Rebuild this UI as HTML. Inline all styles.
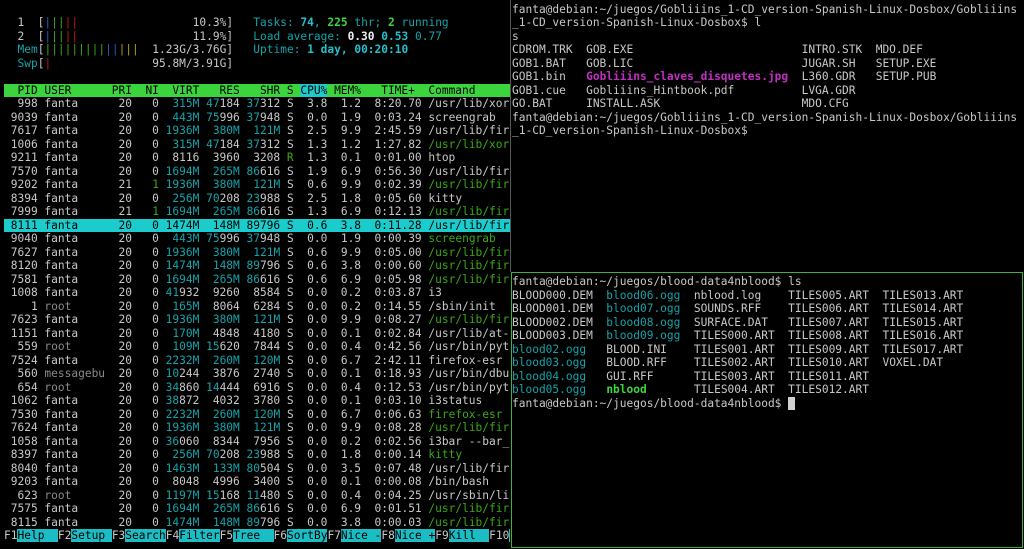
<!DOCTYPE html>
<html><head><meta charset="utf-8"><style>
html,body{margin:0;padding:0;background:#000;width:1024px;height:548px;overflow:hidden}
pre{margin:0;position:absolute;font-family:"DejaVu Sans Mono","Liberation Mono",monospace;font-size:11.2px;line-height:13.5px;color:#c8c8c8;white-space:pre;overflow:hidden}
.c{color:#14a3aa}.C{color:#22c0cc;font-weight:bold}.g{color:#3aa815}.G{color:#3ed43e;font-weight:bold}
.w{color:#f0f0f0;font-weight:bold}.r{color:#c01818}.b{color:#2060c0}.y{color:#b0a010}.d{color:#8a8a8a}.m{color:#c030c0;font-weight:bold}
.hdr{background:#3cd43c;color:#000;display:inline-block;width:506px}
.hdr .cp{background:#1ccccc}
.sel{background:#1ccccc;color:#000;display:inline-block;width:506px}
.k{background:#1bbcc4;color:#000}
.cur{background:#d0d0d0}
</style></head><body>
<div style="position:absolute;left:510px;top:0;width:1px;height:272px;background:#555"></div>
<div style="position:absolute;left:511px;top:272px;width:510px;height:274px;border:1px solid #3cb43c"></div>
<pre style="left:4px;top:2.75px;width:506px;height:546px">

  1  [<span class="b">|</span><span class="g">||</span><span class="r">||</span>                 10.3%]   <span class="c">Tasks: </span><span class="C">74</span><span class="c">, </span><span class="G">225</span><span class="c"> thr; </span><span class="G">2</span><span class="c"> running</span>
  2  [<span class="b">|</span><span class="g">||</span><span class="r">||</span>                 11.9%]   <span class="c">Load average: </span><span class="w">0.30</span> <span class="C">0.53</span> <span class="c">0.77</span>
  <span class="c">Mem</span>[<span class="g">|||||||||</span><span class="b">||</span><span class="y">|||</span>  1.23G/3.76G]   <span class="c">Uptime: </span><span class="C">1 day, 00:20:10</span>
  <span class="c">Swp</span>[<span class="r">|</span>               95.8M/3.91G]

<span class="hdr">  PID USER      PRI  NI  VIRT   RES   SHR S <span class="cp">CPU%</span> MEM%   TIME+  Command</span>
  998 fanta      20   0  <span class="c">315M</span> <span class="c">47</span>184 <span class="c">37</span>312 S  3.8  1.2  8:20.70 /usr/lib/xor
 9039 fanta      20   0  <span class="c">443M</span> <span class="c">75</span>996 <span class="c">37</span>948 S  0.0  1.9  0:03.24 screengrab
 7617 fanta      20   0 <span class="c">1936M</span>  <span class="c">380M</span>  <span class="c">121M</span> S  2.5  9.9  2:45.59 /usr/lib/fir
 1006 fanta      20   0  <span class="c">315M</span> <span class="c">47</span>184 <span class="c">37</span>312 S  1.3  1.2  1:27.82 <span class="g">/usr/lib/xor</span>
 9211 fanta      20   0  8116  3960  3208 <span class="g">R</span>  1.3  0.1  0:01.00 htop
 7570 fanta      20   0 <span class="c">1694M</span>  <span class="c">265M</span> <span class="c">86</span>616 S  1.9  6.9  0:56.30 /usr/lib/fir
 9202 fanta      21   <span class="g">1</span> <span class="c">1936M</span>  <span class="c">380M</span>  <span class="c">121M</span> S  0.6  9.9  0:02.39 <span class="g">/usr/lib/fir</span>
 8394 fanta      20   0  <span class="c">256M</span> <span class="c">70</span>208 <span class="c">23</span>988 S  2.5  1.8  0:05.60 kitty
 7999 fanta      21   <span class="g">1</span> <span class="c">1694M</span>  <span class="c">265M</span> <span class="c">86</span>616 S  1.3  6.9  0:12.13 <span class="g">/usr/lib/fir</span>
<span class="sel"> 8111 fanta      20   0 1474M  148M 89796 S  0.6  3.8  0:11.28 /usr/lib/fir</span>
 9040 fanta      20   0  <span class="c">443M</span> <span class="c">75</span>996 <span class="c">37</span>948 S  0.0  1.9  0:00.39 <span class="g">screengrab</span>
 7627 fanta      20   0 <span class="c">1936M</span>  <span class="c">380M</span>  <span class="c">121M</span> S  0.6  9.9  0:05.00 <span class="g">/usr/lib/fir</span>
 8120 fanta      20   0 <span class="c">1474M</span>  <span class="c">148M</span> <span class="c">89</span>796 S  0.6  3.8  0:00.60 <span class="g">/usr/lib/fir</span>
 7581 fanta      20   0 <span class="c">1694M</span>  <span class="c">265M</span> <span class="c">86</span>616 S  0.6  6.9  0:05.98 <span class="g">/usr/lib/fir</span>
 1008 fanta      20   0 <span class="c">41</span>932  9260  8584 S  0.0  0.2  0:03.87 i3
    1 <span class="d">root</span>       20   0  <span class="c">165M</span>  8064  6284 S  0.0  0.2  0:14.55 /sbin/init
 7623 fanta      20   0 <span class="c">1936M</span>  <span class="c">380M</span>  <span class="c">121M</span> S  0.0  9.9  0:08.27 <span class="g">/usr/lib/fir</span>
 1151 fanta      20   0  <span class="c">170M</span>  4848  4180 S  0.0  0.1  0:02.84 /usr/lib/at-
  559 <span class="d">root</span>       20   0  <span class="c">109M</span> <span class="c">15</span>620  7844 S  0.0  0.4  0:42.56 /usr/bin/pyt
 7524 fanta      20   0 <span class="c">2232M</span>  <span class="c">260M</span>  <span class="c">120M</span> S  0.0  6.7  2:42.11 firefox-esr
  560 <span class="d">messagebu</span>  20   0 <span class="c">10</span>244  3876  2740 S  0.0  0.1  0:18.93 /usr/bin/dbu
  654 <span class="d">root</span>       20   0 <span class="c">34</span>860 <span class="c">14</span>444  6916 S  0.0  0.4  0:12.53 /usr/bin/pyt
 1062 fanta      20   0 <span class="c">38</span>872  4032  3780 S  0.0  0.1  0:03.10 i3status
 7530 fanta      20   0 <span class="c">2232M</span>  <span class="c">260M</span>  <span class="c">120M</span> S  0.0  6.7  0:06.63 <span class="g">firefox-esr</span>
 7624 fanta      20   0 <span class="c">1936M</span>  <span class="c">380M</span>  <span class="c">121M</span> S  0.0  9.9  0:08.28 <span class="g">/usr/lib/fir</span>
 1058 fanta      20   0 <span class="c">36</span>060  8344  7956 S  0.0  0.2  0:02.56 i3bar --bar_
 8397 fanta      20   0  <span class="c">256M</span> <span class="c">70</span>208 <span class="c">23</span>988 S  0.0  1.8  0:00.14 <span class="g">kitty</span>
 8040 fanta      20   0 <span class="c">1463M</span>  <span class="c">133M</span> <span class="c">80</span>504 S  0.0  3.5  0:07.48 /usr/lib/fir
 9203 fanta      20   0  8048  4996  3400 S  0.0  0.1  0:00.08 /bin/bash
  623 <span class="d">root</span>       20   0 <span class="c">1197M</span> <span class="c">15</span>168 <span class="c">11</span>480 S  0.0  0.4  0:04.25 /usr/sbin/li
 7575 fanta      20   0 <span class="c">1694M</span>  <span class="c">265M</span> <span class="c">86</span>616 S  0.0  6.9  0:01.51 <span class="g">/usr/lib/fir</span>
 8115 fanta      20   0 <span class="c">1474M</span>  <span class="c">148M</span> <span class="c">89</span>796 S  0.0  3.8  0:00.03 <span class="g">/usr/lib/fir</span>
F1<span class="k">Help  </span>F2<span class="k">Setup </span>F3<span class="k">Search</span>F4<span class="k">Filter</span>F5<span class="k">Tree  </span>F6<span class="k">SortBy</span>F7<span class="k">Nice -</span>F8<span class="k">Nice +</span>F9<span class="k">Kill  </span>F10<span class="k">Quit</span></pre>
<pre style="left:512px;top:2.75px;width:510px;height:268px">fanta@debian:~/juegos/Gobliiins_1-CD_version-Spanish-Linux-Dosbox/Gobliiins
_1-CD_version-Spanish-Linux-Dosbox$ l
s
CDROM.TRK  GOB.EXE                         INTRO.STK  MDO.DEF
GOB1.BAT   GOB.LIC                         JUGAR.SH   SETUP.EXE
GOB1.bin   <span class="m">Gobliiins_claves_disquetes.jpg</span>  L360.GDR   SETUP.PUB
GOB1.cue   Gobliiins_Hintbook.pdf          LVGA.GDR
GO.BAT     INSTALL.ASK                     MDO.CFG
fanta@debian:~/juegos/Gobliiins_1-CD_version-Spanish-Linux-Dosbox/Gobliiins
_1-CD_version-Spanish-Linux-Dosbox$</pre>
<pre style="left:512px;top:275px;width:508px;height:270px">fanta@debian:~/juegos/blood-data4nblood$ ls
BLOOD000.DEM  <span class="c">blood06.ogg</span>  nblood.log    TILES005.ART  TILES013.ART
BLOOD001.DEM  <span class="c">blood07.ogg</span>  SOUNDS.RFF    TILES006.ART  TILES014.ART
BLOOD002.DEM  <span class="c">blood08.ogg</span>  SURFACE.DAT   TILES007.ART  TILES015.ART
BLOOD003.DEM  <span class="c">blood09.ogg</span>  TILES000.ART  TILES008.ART  TILES016.ART
<span class="c">blood02.ogg</span>   BLOOD.INI    TILES001.ART  TILES009.ART  TILES017.ART
<span class="c">blood03.ogg</span>   BLOOD.RFF    TILES002.ART  TILES010.ART  VOXEL.DAT
<span class="c">blood04.ogg</span>   GUI.RFF      TILES003.ART  TILES011.ART
<span class="c">blood05.ogg</span>   <span class="G">nblood</span>       TILES004.ART  TILES012.ART
fanta@debian:~/juegos/blood-data4nblood$ <span class="cur"> </span></pre>
</body></html>
